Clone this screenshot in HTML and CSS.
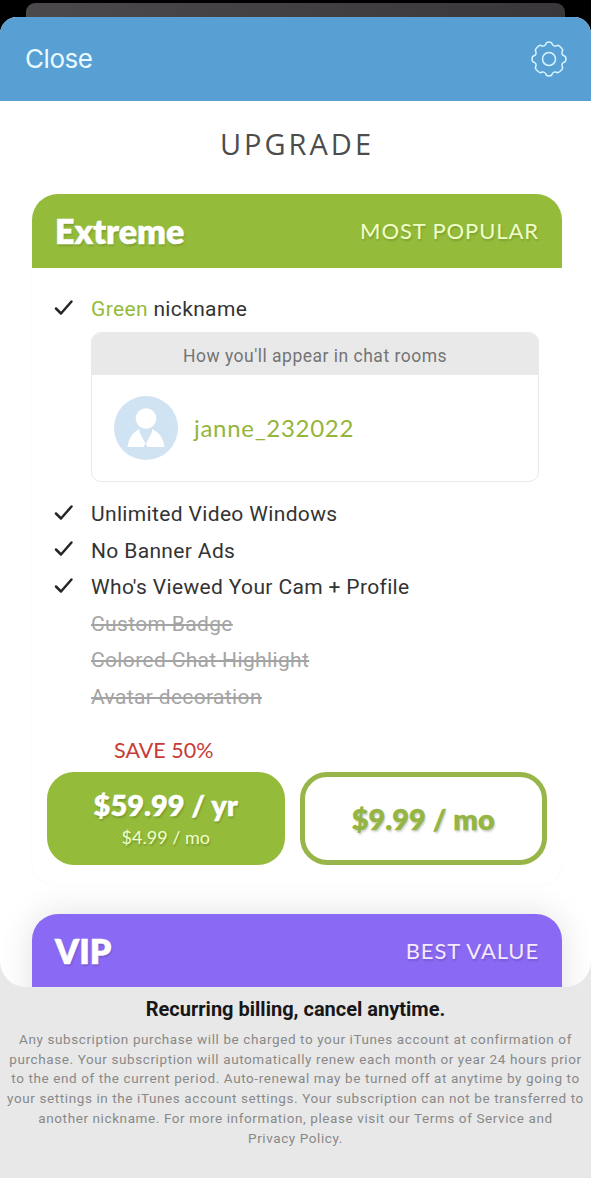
FILE: index.html
```html
<!DOCTYPE html>
<html lang="en">
<head>
<meta charset="utf-8">
<title>Upgrade</title>
<link rel="stylesheet" href="styles.css">
</head>
<body>
<div class="backdrop"></div>
<main class="sheet">
  <header class="navbar">
    <span class="close">Close</span>
    <svg class="gear" viewBox="-19 -19 38 38"><path id="gear" d="M-3.2-15C-2.6-17.6 2.6-17.6 3.2-15C3.9-13 6-12.500 7.700-13.300C9.500-14.800 14.800-9.500 13.300-7.700C12.500-6 13-3.900 15-3.200C17.600-2.600 17.600 2.600 15 3.200C13 3.900 12.500 6 13.300 7.700C14.800 9.500 9.500 14.800 7.700 13.300C6 12.500 3.900 13 3.200 15C2.600 17.600-2.600 17.600-3.200 15C-3.900 13-6 12.500-7.700 13.300C-9.500 14.800-14.800 9.500-13.300 7.700C-12.500 6-13 3.900-15 3.200C-17.600 2.600-17.600-2.600-15-3.200C-13-3.900-12.500-6-13.300-7.700C-14.800-9.500-9.500-14.800-7.700-13.300C-6-12.500-3.900-13-3.200-15Z"/><circle r="6.500"/></svg>
  </header>
  <section class="plans">
    <h1 class="title">UPGRADE</h1>
    <article class="card">
      <div class="card-head green"><h2 class="plan">Extreme</h2><span class="tag popular">MOST POPULAR</span></div>
      <ul class="features">
        <li class="f1"><svg class="check" viewBox="0 0 20 18"><path d="M2 9.500 7 14.500 17.500 2.500"/></svg><span><b class="accent">Green</b> nickname</span></li>
        <li class="preview">
          <div class="preview-head">How you'll appear in chat rooms</div>
          <div class="preview-body">
            <svg class="avatar" viewBox="0 0 64 64"><circle class="disc" cx="32" cy="32" r="32"/><circle cx="32" cy="22.500" r="10.300"/><path d="M25.500 33Q15 38 13.500 51H29.500L31.500 47.500 25.500 36ZM38 33Q49 38 50.500 51H33.500L32 47.500 38 36Z"/></svg>
            <span class="nick">janne_232022</span>
          </div>
        </li>
        <li class="f2"><svg class="check" viewBox="0 0 20 18"><path d="M2 9.500 7 14.500 17.500 2.500"/></svg><span>Unlimited Video Windows</span></li>
        <li class="f3"><svg class="check" viewBox="0 0 20 18"><path d="M2 9.500 7 14.500 17.500 2.500"/></svg><span>No Banner Ads</span></li>
        <li class="f4"><svg class="check" viewBox="0 0 20 18"><path d="M2 9.500 7 14.500 17.500 2.500"/></svg><span>Who's Viewed Your Cam + Profile</span></li>
        <li class="off"><span>Custom Badge</span></li>
        <li class="off"><span>Colored Chat Highlight</span></li>
        <li class="off"><span>Avatar decoration</span></li>
      </ul>
      <div class="save">SAVE 50%</div>
      <div class="prices">
        <div class="price solid"><span class="amount">$59.99 / yr</span><span class="per">$4.99 / mo</span></div>
        <div class="price outline"><span class="amount month">$9.99 / mo</span></div>
      </div>
    </article>
    <article class="card vip">
      <div class="card-head purple"><h2 class="plan vip-name">VIP</h2><span class="tag value">BEST VALUE</span></div>
    </article>
  </section>
</main>
<footer class="legal">
  <h3 class="billing">Recurring billing, cancel anytime.</h3>
  <p class="terms">Any subscription purchase will be charged to your iTunes account at confirmation of<br>purchase. Your subscription will automatically renew each month or year 24 hours prior<br>to the end of the current period. Auto-renewal may be turned off at anytime by going to<br>your settings in the iTunes account settings. Your subscription can not be transferred to<br>another nickname. For more information, please visit our Terms of Service and<br>Privacy Policy.</p>
</footer>
</body>
</html>
```
FILE: styles.css
```css
* { box-sizing: border-box; margin: 0; padding: 0; }
body { width: 591px; height: 1178px; overflow: hidden; background: linear-gradient(#000 0 100px, #e8e8e8 100px); font-family: Roboto, sans-serif; }
.backdrop { height: 14px; margin: 3px 26px 0; border-radius: 9px 9px 0 0; background: linear-gradient(90deg, #4b494b, #3a373b); }
.sheet { height: 970px; overflow: hidden; border-radius: 17px 17px 26px 26px; background: #fff; }
.navbar { height: 84px; background: #589fd3; display: flex; justify-content: space-between; align-items: center; padding: 0 23px 0 25px; }
.close { font: 26px/30px Inter, sans-serif; letter-spacing: -.45px; color: #e8faff; }
.gear { width: 38px; height: 38px; fill: none; stroke: #d6f5ff; stroke-width: 1.5; }
.plans { padding: 0 29px 0 32px; }
.title { height: 93px; padding-top: 24px; text-align: center; font: 400 29px/38px "Open Sans", sans-serif; letter-spacing: 3px; color: #4c4c4c; }
.card { border-radius: 26px 26px 20px 20px; box-shadow: 0 0 2px rgba(0,0,0,.06); height: 690px; }
.card-head { display: flex; justify-content: space-between; align-items: center; height: 74px; padding: 0 23px; border-radius: 26px 26px 0 0; color: #fff; text-shadow: 1px 2px 2px rgba(0,0,0,.15); }
.green { background: #94bb3a; }
.purple { background: #8a69f4; }
.plan { font: 800 34px/40px Lato, sans-serif; -webkit-text-stroke: .5px #fff; }
.tag { font: 400 22px/30px Lato, sans-serif; letter-spacing: .9px; }
.popular { color: #efffc9; }
.value { color: #f4e9ff; }
.features { list-style: none; padding: 23px 23px 0; font-size: 21px; letter-spacing: .35px; color: #333; }
.features li { height: 36.5px; display: flex; align-items: center; padding-left: 36px; }
.check { width: 20px; height: 18px; margin-left: -37px; margin-right: 17px; margin-top: -3px; fill: none; stroke: #262626; stroke-width: 2.5; stroke-linecap: round; stroke-linejoin: round; }
.accent { font-weight: 400; color: #94bb3a; }
.features .preview { display: block; height: 150px; margin: 4.500px 0 14px 36px; padding: 0; border: 1.500px solid #e9e9e9; border-radius: 10px; overflow: hidden; }
.preview-head { height: 42px; line-height: 46px; text-align: center; font-size: 17.500px; background: #e9e9e9; color: #747474; letter-spacing: .5px; }
.preview-body { height: 105px; display: flex; align-items: center; padding-left: 22px; }
.avatar { width: 64px; height: 64px; fill: #fff; }
.disc { fill: #d0e3f3; }
.nick { margin-left: 16px; font: 24px/30px Lato, sans-serif; letter-spacing: .7px; color: #94b53a; }
.features .off { color: #a4a4a4; }
.off span { text-decoration: line-through 1.500px; }
.save { padding-left: 82px; margin-top: 21px; height: 28px; font: 21.500px/28px Lato, sans-serif; color: #c83b36; }
.prices { display: flex; gap: 15px; padding: 8px 15px 0; }
.price { flex: 1; height: 93px; border-radius: 27px; display: flex; flex-direction: column; align-items: center; text-shadow: 1px 2px 2px rgba(0,0,0,.18); }
.solid { background: #94bb3a; color: #fff; padding-top: 14px; }
.outline { border: 5px solid #98b54a; color: #94b541; justify-content: center; }
.amount { font: 800 29px/38px Lato, sans-serif; -webkit-text-stroke: .3px; }
.per { font: 18px/26px Lato, sans-serif; color: #efffc9; }
.vip { margin-top: 30px; box-shadow: 0 0 34px rgba(0,0,0,.12); }
.legal { padding-top: 9px; text-align: center; color: #888; }
.billing { font: 700 20px/26px Roboto, sans-serif; color: #171717; }
.terms { margin-top: 8px; font-size: 13.500px; line-height: 19.700px; letter-spacing: .6px; white-space: nowrap; }
```
